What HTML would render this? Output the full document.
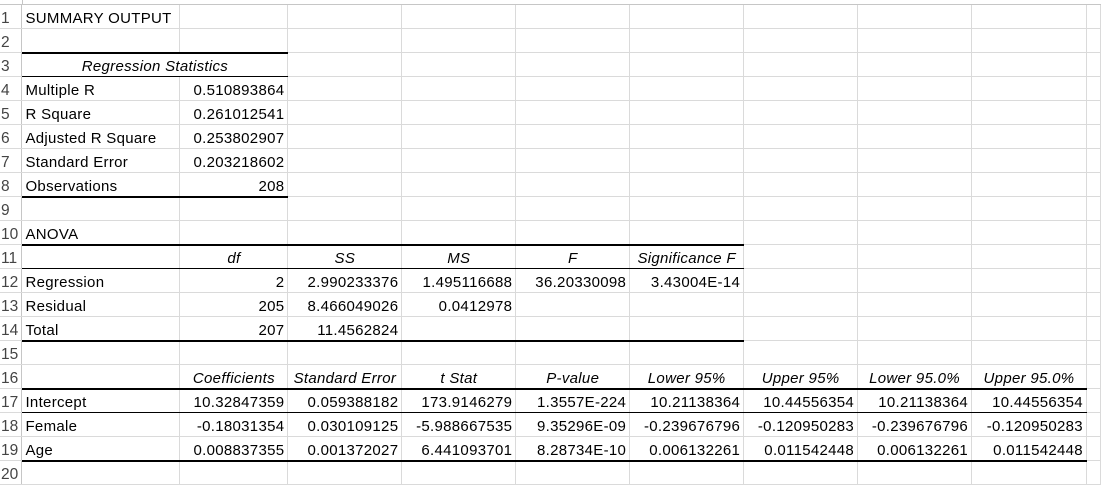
<!DOCTYPE html>
<html><head><style>
body{margin:0;width:1101px;height:485px;overflow:hidden;background:#fff;font-family:"Liberation Sans",Arial,sans-serif;position:relative}
table{position:absolute;left:0;top:5px;border-collapse:collapse;table-layout:fixed}
td{height:19px;padding:4px 3px 0 3px;border-right:1px solid #dadada;border-bottom:1px solid #dadada;font-size:15px;color:#000;white-space:nowrap;overflow:visible;letter-spacing:.3px;line-height:19px}
td.h{color:#444;padding:4px 0 0 1px;border-right:1px solid #c6c6c6;overflow:hidden;font-size:15.5px;letter-spacing:0}
.r{text-align:right}.c{text-align:center}.i{font-style:italic}
.ln{position:absolute;background:#000}
.th{position:absolute;background:#000;height:1px}
</style></head><body>
<div style="position:absolute;left:0;top:0;width:1101px;height:4px;border-bottom:1px solid #c6c6c6;background:#fff"></div>
<div style="position:absolute;left:22px;top:0;width:1px;height:5px;background:#c6c6c6"></div>
<table>
<colgroup><col style="width:22px"><col style="width:158px"><col style="width:108px"><col style="width:114px"><col style="width:114px"><col style="width:114px"><col style="width:114px"><col style="width:114px"><col style="width:114px"><col style="width:115px"><col style="width:14px"></colgroup>
<tr><td class="h">1</td><td>SUMMARY OUTPUT</td><td></td><td></td><td></td><td></td><td></td><td></td><td></td><td></td><td></td></tr>
<tr><td class="h">2</td><td></td><td></td><td></td><td></td><td></td><td></td><td></td><td></td><td></td><td></td></tr>
<tr><td class="h">3</td><td colspan="2" class="c i">Regression Statistics</td><td></td><td></td><td></td><td></td><td></td><td></td><td></td><td></td></tr>
<tr><td class="h">4</td><td>Multiple R</td><td class="r">0.510893864</td><td></td><td></td><td></td><td></td><td></td><td></td><td></td><td></td></tr>
<tr><td class="h">5</td><td>R Square</td><td class="r">0.261012541</td><td></td><td></td><td></td><td></td><td></td><td></td><td></td><td></td></tr>
<tr><td class="h">6</td><td>Adjusted R Square</td><td class="r">0.253802907</td><td></td><td></td><td></td><td></td><td></td><td></td><td></td><td></td></tr>
<tr><td class="h">7</td><td>Standard Error</td><td class="r">0.203218602</td><td></td><td></td><td></td><td></td><td></td><td></td><td></td><td></td></tr>
<tr><td class="h">8</td><td>Observations</td><td class="r">208</td><td></td><td></td><td></td><td></td><td></td><td></td><td></td><td></td></tr>
<tr><td class="h">9</td><td></td><td></td><td></td><td></td><td></td><td></td><td></td><td></td><td></td><td></td></tr>
<tr><td class="h">10</td><td>ANOVA</td><td></td><td></td><td></td><td></td><td></td><td></td><td></td><td></td><td></td></tr>
<tr><td class="h">11</td><td></td><td class="c i">df</td><td class="c i">SS</td><td class="c i">MS</td><td class="c i">F</td><td class="c i">Significance F</td><td></td><td></td><td></td><td></td></tr>
<tr><td class="h">12</td><td>Regression</td><td class="r">2</td><td class="r">2.990233376</td><td class="r">1.495116688</td><td class="r">36.20330098</td><td class="r">3.43004E-14</td><td></td><td></td><td></td><td></td></tr>
<tr><td class="h">13</td><td>Residual</td><td class="r">205</td><td class="r">8.466049026</td><td class="r">0.0412978</td><td></td><td></td><td></td><td></td><td></td><td></td></tr>
<tr><td class="h">14</td><td>Total</td><td class="r">207</td><td class="r">11.4562824</td><td></td><td></td><td></td><td></td><td></td><td></td><td></td></tr>
<tr><td class="h">15</td><td></td><td></td><td></td><td></td><td></td><td></td><td></td><td></td><td></td><td></td></tr>
<tr><td class="h">16</td><td></td><td class="c i">Coefficients</td><td class="c i">Standard Error</td><td class="c i">t Stat</td><td class="c i">P-value</td><td class="c i">Lower 95%</td><td class="c i">Upper 95%</td><td class="c i">Lower 95.0%</td><td class="c i">Upper 95.0%</td><td></td></tr>
<tr><td class="h">17</td><td>Intercept</td><td class="r">10.32847359</td><td class="r">0.059388182</td><td class="r">173.9146279</td><td class="r">1.3557E-224</td><td class="r">10.21138364</td><td class="r">10.44556354</td><td class="r">10.21138364</td><td class="r">10.44556354</td><td></td></tr>
<tr><td class="h">18</td><td>Female</td><td class="r">-0.18031354</td><td class="r">0.030109125</td><td class="r">-5.988667535</td><td class="r">9.35296E-09</td><td class="r">-0.239676796</td><td class="r">-0.120950283</td><td class="r">-0.239676796</td><td class="r">-0.120950283</td><td></td></tr>
<tr><td class="h">19</td><td>Age</td><td class="r">0.008837355</td><td class="r">0.001372027</td><td class="r">6.441093701</td><td class="r">8.28734E-10</td><td class="r">0.006132261</td><td class="r">0.011542448</td><td class="r">0.006132261</td><td class="r">0.011542448</td><td></td></tr>
<tr><td class="h">20</td><td></td><td></td><td></td><td></td><td></td><td></td><td></td><td></td><td></td><td></td></tr>
</table>
<div class="ln" style="left:22px;top:52px;width:266px;height:2px"></div>
<div class="th" style="left:22px;top:76px;width:266px"></div>
<div class="ln" style="left:22px;top:196px;width:266px;height:2px"></div>
<div class="ln" style="left:22px;top:244px;width:722px;height:2px"></div>
<div class="th" style="left:22px;top:268px;width:722px"></div>
<div class="ln" style="left:22px;top:340px;width:722px;height:2px"></div>
<div class="ln" style="left:22px;top:388px;width:1065px;height:2px"></div>
<div class="th" style="left:22px;top:412px;width:1065px"></div>
<div class="ln" style="left:22px;top:460px;width:1065px;height:2px"></div>
</body></html>
